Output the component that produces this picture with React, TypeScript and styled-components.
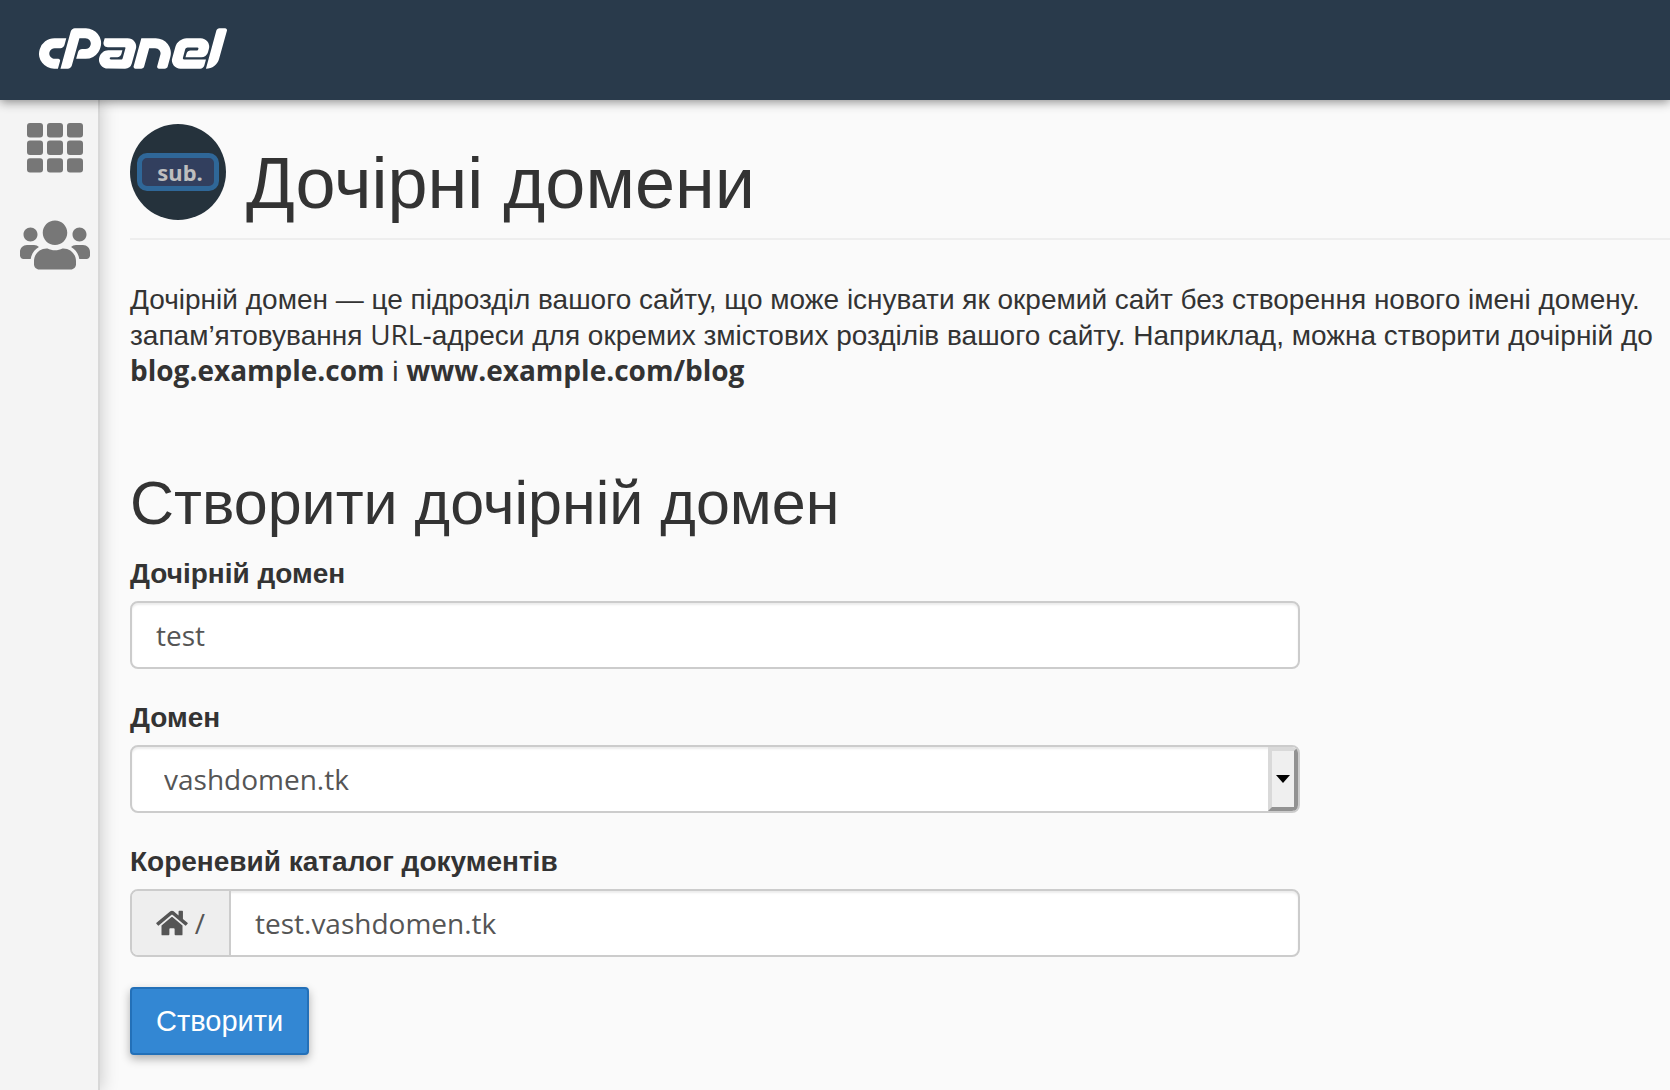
import React from 'react';
import styled, { createGlobalStyle } from 'styled-components';
import { SiCpanel } from 'react-icons/si';
import { FaHome, FaUsers } from 'react-icons/fa';

const CYRILLIC = '"Liberation Sans", Arial, Helvetica, sans-serif';
const LATIN = '"Open Sans", "Noto Sans", sans-serif';

const GlobalStyle = createGlobalStyle`
  *, *::before, *::after { box-sizing: border-box; }
  html { height: 100%; }
  body {
    margin: 0;
    min-height: 100%;
    background: #fafafa;
    color: #333;
    font: 28px/36px ${CYRILLIC};
  }
`;

const Page = styled.div`
  display: flex;
  flex-direction: column;
  min-height: 100vh;
  overflow: hidden;
`;

const TopBar = styled.header`
  display: flex;
  align-items: center;
  height: 100px;
  padding: 0 39px;
  background: #293a4b;
  box-shadow: 0 2px 10px rgba(0, 0, 0, 0.45);
  z-index: 1;
`;

const LogoLink = styled.a`
  display: flex;
  padding-bottom: 3px;
  color: #fff;
`;

const Logo = styled(SiCpanel)`
  display: block;
  width: 188px;
  height: 41px;
`;

const Body = styled.div`
  display: flex;
  flex: 1;
`;

const Sidebar = styled.nav`
  display: flex;
  flex-direction: column;
  align-items: center;
  flex: none;
  gap: 44px;
  width: 100px;
  padding: 23px 0 0 12px;
  background: #f4f4f4;
  border-right: 2px solid #d8d8d8;
  box-shadow: 2px 0 16px rgba(0, 0, 0, 0.18);
`;

const SideLink = styled.a`
  display: flex;
  color: #777;
`;

const GridGlyph = styled.svg`
  display: block;
  width: 56px;
  height: 50px;
  fill: currentColor;
`;

const UsersGlyph = styled(FaUsers)`
  display: block;
  width: 70px;
  height: 56px;
`;

const Main = styled.main`
  flex: 1;
  min-width: 0;
  padding: 24px 0 36px 30px;
`;

const PageHeader = styled.div`
  display: flex;
  align-items: flex-start;
  gap: 20px;
  padding-bottom: 18px;
  border-bottom: 2px solid #eee;
`;

const SubIcon = styled.div`
  display: grid;
  place-items: center;
  flex: none;
  width: 96px;
  height: 96px;
  border-radius: 50%;
  background: #25323c;
`;

const SubBadge = styled.span`
  width: 82px;
  height: 38px;
  padding-left: 4px;
  border: 5px solid #2f6798;
  border-radius: 10px;
  background: #323f5e;
  color: #bebebe;
  font: 700 22px/28px "Noto Sans", ${LATIN};
  text-align: center;
`;

const PageTitle = styled.h1`
  margin: 0;
  padding-top: 22px;
  font-size: 72px;
  line-height: 74px;
  font-weight: 400;
  white-space: nowrap;
`;

const Intro = styled.p`
  margin: 42px 0 0;
  white-space: nowrap;
`;

const Latin = styled.span`
  font-family: ${LATIN};
  line-height: 1;
`;

const Domain = styled.strong`
  font-family: ${LATIN};
  line-height: 1;
`;

const Form = styled.form`
  display: flex;
  flex-direction: column;
  align-items: flex-start;
  gap: 30px;
  max-width: 1200px;
  margin-top: 80px;
  padding-right: 30px;
`;

const FormTitle = styled.h2`
  margin: 0 0 -12px;
  font-size: 61px;
  line-height: 67px;
  font-weight: 400;
`;

const Field = styled.div`
  display: flex;
  flex-direction: column;
  gap: 9px;
  width: 100%;
`;

const Label = styled.label`
  padding-top: 1px;
  font-weight: 700;
`;

const ControlBox = styled.div`
  position: relative;
  display: flex;
  height: 68px;
  overflow: hidden;
  border: 2px solid #ccc;
  border-radius: 8px;
  background: #fff;
  box-shadow: inset 0 2px 2px rgba(0, 0, 0, 0.075);
`;

const TextInput = styled.input`
  flex: 1;
  min-width: 0;
  padding: 0 24px;
  border: 0;
  outline: 0;
  background: transparent;
  color: #555;
  font: 28px/36px ${LATIN};
`;

const Select = styled.select`
  flex: 1;
  padding: 0 32px;
  border: 0;
  outline: 0;
  appearance: none;
  background: transparent;
  color: #555;
  font: 28px/36px ${LATIN};
`;

const SelectArrow = styled.span`
  position: absolute;
  top: 0;
  right: 0;
  bottom: 0;
  display: grid;
  place-items: center;
  width: 30px;
  border: 4px solid;
  border-color: #d9d9d9 #929292 #929292 #d9d9d9;
  background: #efefef;
  pointer-events: none;

  &::after {
    content: '';
    border: 7px solid transparent;
    border-top: 8px solid #000;
    border-bottom: 0;
  }
`;

const Addon = styled.span`
  display: flex;
  align-items: center;
  justify-content: center;
  gap: 7px;
  width: 99px;
  border-right: 2px solid #ccc;
  background: #eee;
  color: #555;
  font-family: ${LATIN};
`;

const HomeGlyph = styled(FaHome)`
  display: block;
  width: 32px;
  height: 28px;
`;

const SubmitButton = styled.button`
  height: 68px;
  padding: 0 24px;
  border: 2px solid #2370b8;
  border-radius: 4px;
  background: #3387d3;
  box-shadow: 0 4px 10px rgba(0, 0, 0, 0.3);
  color: #fff;
  font: 29px/36px ${CYRILLIC};
`;

const CELLS = [0, 1, 2];

function GridIcon() {
  return (
    <GridGlyph viewBox="0 0 56 50" aria-hidden="true">
      {CELLS.map((row) =>
        CELLS.map((col) => (
          <rect key={`${row}-${col}`} x={col * 20} y={row * 17.6} width="16" height="14.4" rx="3" />
        )),
      )}
    </GridGlyph>
  );
}

export default function App() {
  return (
    <Page>
      <GlobalStyle />
      <TopBar>
        <LogoLink href="#" aria-label="cPanel">
          <Logo viewBox="0 9.3 24 5.4" preserveAspectRatio="none" />
        </LogoLink>
      </TopBar>
      <Body>
        <Sidebar>
          <SideLink href="#home" aria-label="Головна">
            <GridIcon />
          </SideLink>
          <SideLink href="#users" aria-label="Користувачі">
            <UsersGlyph />
          </SideLink>
        </Sidebar>
        <Main>
          <PageHeader>
            <SubIcon>
              <SubBadge>sub.</SubBadge>
            </SubIcon>
            <PageTitle>Дочірні домени</PageTitle>
          </PageHeader>
          <Intro>
            Дочірній домен — це підрозділ вашого сайту, що може існувати як окремий сайт без створення нового імені домену.
            <br />
            запам’ятовування <Latin>URL</Latin>-адреси для окремих змістових розділів вашого сайту. Наприклад, можна створити дочірній до
            <br />
            <Domain>blog.example.com</Domain> і <Domain>www.example.com/blog</Domain>
          </Intro>
          <Form onSubmit={(event) => event.preventDefault()}>
            <FormTitle>Створити дочірній домен</FormTitle>
            <Field>
              <Label htmlFor="subdomain">Дочірній домен</Label>
              <ControlBox>
                <TextInput id="subdomain" type="text" defaultValue="test" />
              </ControlBox>
            </Field>
            <Field>
              <Label htmlFor="domain">Домен</Label>
              <ControlBox>
                <Select id="domain" defaultValue="vashdomen.tk">
                  <option value="vashdomen.tk">vashdomen.tk</option>
                </Select>
                <SelectArrow />
              </ControlBox>
            </Field>
            <Field>
              <Label htmlFor="root">Кореневий каталог документів</Label>
              <ControlBox>
                <Addon>
                  <HomeGlyph />/
                </Addon>
                <TextInput id="root" type="text" defaultValue="test.vashdomen.tk" />
              </ControlBox>
            </Field>
            <SubmitButton type="submit">Створити</SubmitButton>
          </Form>
        </Main>
      </Body>
    </Page>
  );
}
